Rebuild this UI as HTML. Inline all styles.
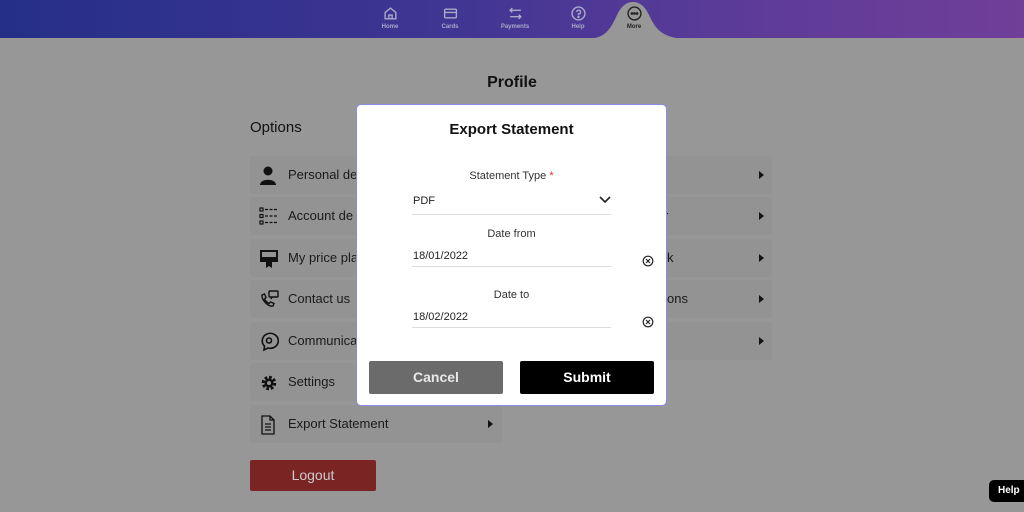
<!DOCTYPE html>
<html><head><meta charset="utf-8"><style>
*{box-sizing:border-box;margin:0;padding:0}
body{width:1024px;height:512px;overflow:hidden;background:#979797;font-family:"Liberation Sans",sans-serif;position:relative;color:#111}
.hdr{position:absolute;left:0;top:0;width:1024px;height:38px;background:linear-gradient(90deg,#252f88 0%,#3d3592 40%,#5a3b98 70%,#703f98 100%)}
.nav{position:absolute;top:6px;text-align:center;font-size:6px;font-weight:bold;color:#a9a9c9;width:40px}
.nav svg{display:block;margin:0 auto 3px}
.title{position:absolute;left:0;width:1024px;top:74px;text-align:center;font-size:16px;font-weight:bold;color:#111}
.opt{position:absolute;left:250px;top:119px;font-size:15px}
.item{position:absolute;height:38px;background:#939393;border-radius:3px;font-size:13px;color:#1a1a1a;line-height:38px}
.item .ic{position:absolute;left:9px;top:10px}
.item .t{position:absolute;left:38px}
.arr{position:absolute;width:0;height:0;border-top:4px solid transparent;border-bottom:4px solid transparent;border-left:5px solid #111;top:15px}
.logout{position:absolute;left:250px;top:460px;width:126px;height:31px;background:#7a2424;border-radius:2px;color:#ccc;font-size:14px;text-align:center;line-height:31px}
.help{position:absolute;left:989px;top:480px;width:40px;height:22px;background:#000;border-radius:5px;color:#fff;font-size:10px;font-weight:bold;line-height:22px;padding-left:9px}
.modal{position:absolute;left:356px;top:104px;width:311px;height:302px;background:#fff;border:1px solid #8a8ae8;border-radius:5px}
.m{position:absolute;font-size:11px;color:#333}
.line{position:absolute;left:55px;width:199px;height:1px;background:#ddd}
.btn{position:absolute;top:256px;width:134px;height:33px;border-radius:2px;color:#fff;font-size:14px;font-weight:bold;text-align:center;line-height:33px}
</style></head><body>
<div class="hdr">
<svg style="position:absolute;left:585px;top:0" width="105" height="39"><path d="M0 39 C20 39 25 30 32 15 C38 2 46 2 48 2 C50 2 58 2 64 15 C71 30 78 39 105 39 Z" fill="#979797"/></svg>
<div class="nav" style="left:370px"><svg width="15" height="15" viewBox="0 0 14 14" fill="none" stroke="#a9a9c9" stroke-width="1.3"><path d="M2 6 L7 2 L12 6 V12 H2 Z M5.5 12 V8.5 H8.5 V12"/></svg>Home</div>
<div class="nav" style="left:430px"><svg width="15" height="15" viewBox="0 0 14 14" fill="none" stroke="#a9a9c9" stroke-width="1.3"><rect x="1.5" y="3" width="11" height="8" rx="1"/><path d="M1.5 6 H12.5"/></svg>Cards</div>
<div class="nav" style="left:495px"><svg width="15" height="15" viewBox="0 0 14 14" fill="none" stroke="#a9a9c9" stroke-width="1.3"><path d="M2 4 H12 M4 2 L2 4 L4 6 M12 10 H2 M10 8 L12 10 L10 12"/></svg>Payments</div>
<div class="nav" style="left:558px"><svg width="15" height="15" viewBox="0 0 14 14" fill="none" stroke="#a9a9c9" stroke-width="1.3"><circle cx="7" cy="7" r="6"/><path d="M5.3 5.5 A1.8 1.8 0 1 1 7 7.5 V8.5"/><circle cx="7" cy="10.3" r=".5" fill="#a9a9c9"/></svg>Help</div>
<div class="nav" style="left:614px;color:#222"><svg width="15" height="15" viewBox="0 0 14 14" fill="none" stroke="#222" stroke-width="1.3"><circle cx="7" cy="7" r="6"/><circle cx="4.6" cy="7" r=".6" fill="#222"/><circle cx="7" cy="7" r=".6" fill="#222"/><circle cx="9.4" cy="7" r=".6" fill="#222"/></svg>More</div>
</div>
<div class="title">Profile</div>
<div class="opt">Options</div>

<div class="item" style="left:250px;top:156px;width:252px"><svg class="ic" width="18" height="20" viewBox="0 0 18 20"><circle cx="9" cy="5" r="4.5" fill="#111"/><path d="M1 19 C1 12 17 12 17 19 Z" fill="#111"/></svg><span class="t">Personal de</span></div>
<div class="item" style="left:250px;top:197px;width:252px"><svg class="ic" width="20" height="18" viewBox="0 0 20 18" fill="none" stroke="#111" stroke-width="1.2"><rect x="1" y="1" width="3" height="3"/><rect x="1" y="7.5" width="3" height="3"/><rect x="1" y="14" width="3" height="3"/><path d="M6 2.5 H19 M6 9 H19 M6 15.5 H19" stroke-dasharray="3 1.5"/></svg><span class="t">Account de</span></div>
<div class="item" style="left:250px;top:239px;width:252px"><svg class="ic" width="20" height="20" viewBox="0 0 20 20"><rect x="1" y="1" width="18" height="12" fill="#111"/><rect x="3" y="3" width="14" height="5" fill="#939393"/><path d="M7 13 V19 L10 17 L13 19 V13Z" fill="#111"/></svg><span class="t">My price pla</span></div>
<div class="item" style="left:250px;top:280px;width:252px"><svg class="ic" width="20" height="20" viewBox="0 0 20 20" fill="none" stroke="#111" stroke-width="1.4"><path d="M3 5 L5.5 4 L7 7.5 L5.5 9 C6.5 11 8 12.5 10 13.5 L11.5 12 L15 13.5 L14 16 C9 17 2.5 10 3 5Z"/><rect x="10" y="1" width="9" height="6" rx="1"/><path d="M12 9 L13 7"/></svg><span class="t">Contact us</span></div>
<div class="item" style="left:250px;top:322px;width:252px"><svg class="ic" width="20" height="20" viewBox="0 0 20 20" fill="none" stroke="#111" stroke-width="1.6"><path d="M5 18 L5.5 14 A8 7.5 0 1 1 9 16 Z"/><circle cx="10" cy="8.5" r="2.5"/></svg><span class="t">Communica</span></div>
<div class="item" style="left:250px;top:363px;width:252px"><svg class="ic" width="20" height="20" viewBox="0 0 20 20"><circle cx="10" cy="10" r="5.5" fill="none" stroke="#111" stroke-width="3.5" stroke-dasharray="2.6 1.7"/><circle cx="10" cy="10" r="4.5" fill="#111"/><circle cx="10" cy="10" r="2" fill="#939393"/></svg><span class="t">Settings</span></div>
<div class="item" style="left:250px;top:405px;width:252px"><svg class="ic" width="18" height="20" viewBox="0 0 18 20" fill="none" stroke="#111" stroke-width="1.3"><path d="M3 1 H11 L15 5 V19 H3 Z M11 1 V5 H15 M6 9 H12 M6 12 H12 M6 15 H12"/></svg><span class="t">Export Statement</span><div class="arr" style="left:238px"></div></div>

<div class="item" style="left:510px;top:156px;width:262px"><div class="arr" style="left:249px"></div></div>
<div class="item" style="left:510px;top:197px;width:262px"><span class="t" style="left:154px">r</span><div class="arr" style="left:249px"></div></div>
<div class="item" style="left:510px;top:239px;width:262px"><span class="t" style="left:157px">k</span><div class="arr" style="left:249px"></div></div>
<div class="item" style="left:510px;top:280px;width:262px"><span class="t" style="left:157px">ons</span><div class="arr" style="left:249px"></div></div>
<div class="item" style="left:510px;top:322px;width:262px"><div class="arr" style="left:249px"></div></div>

<div class="logout">Logout</div>
<div class="help">Help</div>

<div class="modal">
<div class="m" style="left:0;width:309px;top:16px;text-align:center;font-size:15px;font-weight:bold;color:#111">Export Statement</div>
<div class="m" style="left:0;width:309px;top:65px;text-align:center">Statement Type <span style="color:#d33">*</span></div>
<div class="m" style="left:56px;top:90px;color:#222">PDF</div>
<svg style="position:absolute;left:242px;top:91px" width="12" height="8" viewBox="0 0 12 8"><path d="M1 1 L6 6 L11 1" fill="none" stroke="#222" stroke-width="1.6"/></svg>
<div class="line" style="top:109px"></div>
<div class="m" style="left:0;width:309px;top:123px;text-align:center">Date from</div>
<div class="m" style="left:56px;top:145px;color:#222">18/01/2022</div>
<div class="line" style="top:161px"></div>
<svg style="position:absolute;left:285px;top:150px" width="12" height="12" viewBox="0 0 12 12" fill="none" stroke="#222" stroke-width="1.2"><circle cx="6" cy="6" r="4.8"/><path d="M4 4 L8 8 M8 4 L4 8"/></svg>
<div class="m" style="left:0;width:309px;top:184px;text-align:center">Date to</div>
<div class="m" style="left:56px;top:206px;color:#222">18/02/2022</div>
<div class="line" style="top:222px"></div>
<svg style="position:absolute;left:285px;top:211px" width="12" height="12" viewBox="0 0 12 12" fill="none" stroke="#222" stroke-width="1.2"><circle cx="6" cy="6" r="4.8"/><path d="M4 4 L8 8 M8 4 L4 8"/></svg>
<div class="btn" style="left:12px;background:#6b6b6b;color:#e8e8e8">Cancel</div>
<div class="btn" style="left:163px;background:#000">Submit</div>
</div>
</body></html>
